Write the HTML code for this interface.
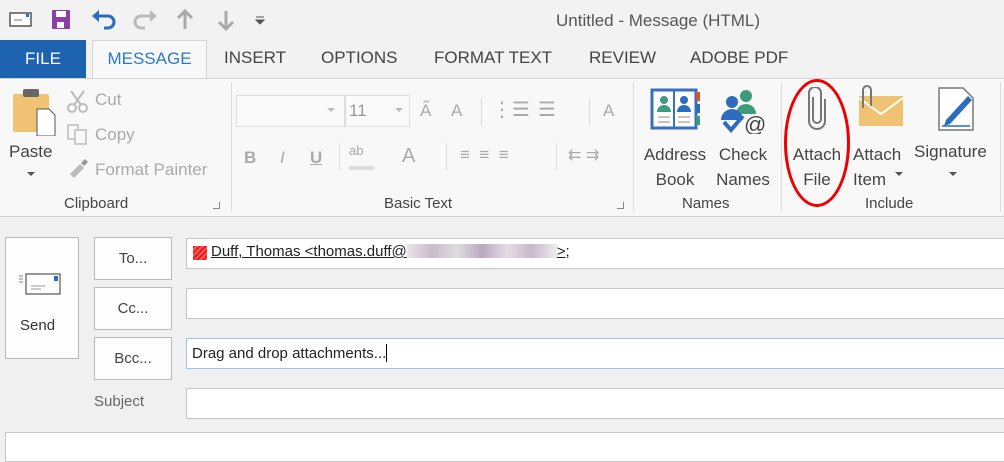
<!DOCTYPE html>
<html><head><meta charset="utf-8"><style>
*{margin:0;padding:0;box-sizing:border-box}
body{width:1004px;height:450px;overflow:hidden;background:#f0f0f0;font-family:"Liberation Sans","DejaVu Sans",sans-serif;position:relative;color:#444}
.a{position:absolute}
.t{font-size:17px;color:#444;white-space:nowrap}
.g{color:#aaa}
.btn{position:absolute;background:#fdfdfd;border:1px solid #b9b9b9;font-size:15px;color:#444;text-align:center}
.fld{position:absolute;left:186px;width:830px;height:31px;background:#fff;border:1px solid #c6c6c6}
.sep{position:absolute;width:1px;background:#dcdcdc}
</style></head><body>
<div class="a" style="left:0;top:0;width:1004px;height:40px;background:#f2f2f2"></div>
<div class="a" style="left:0;top:40px;width:1004px;height:38px;background:#f2f2f2"></div>
<svg class="a" style="left:0;top:0" width="280" height="40">
<rect x="10" y="13" width="21" height="13" fill="#fff" stroke="#555" stroke-width="1.5"/><line x1="14" y1="20" x2="22" y2="20" stroke="#777"/><rect x="26" y="14" width="3" height="3" fill="#2a6dbf"/>
<rect x="52" y="10" width="18" height="19" rx="1" fill="#8b3fa7"/><rect x="56" y="11" width="10" height="6" fill="#fff"/><rect x="57" y="22" width="7" height="6" fill="#fff"/>
<path d="M97 16 h11 a6 6 0 0 1 0 12 h-4" fill="none" stroke="#2a6dbf" stroke-width="3"/><path d="M92 16 l7-6 v12z" fill="#2a6dbf"/>
<path d="M152 16 h-11 a6 6 0 0 0 0 12 h4" fill="none" stroke="#bbb" stroke-width="3"/><path d="M157 16 l-7-6 v12z" fill="#bbb"/>
<path d="M185 29 V12 M178 18 l7-7 7 7" fill="none" stroke="#aaa" stroke-width="3"/>
<path d="M226 11 V28 M219 22 l7 7 7-7" fill="none" stroke="#aaa" stroke-width="3"/>
<path d="M256 17 h8 M256 20 l4 4 4-4z" stroke="#555" fill="#555"/>
</svg>
<div class="a t" style="left:556px;top:11px;font-size:17px;color:#555">Untitled - Message (HTML)</div>
<div class="a" style="left:0;top:40px;width:86px;height:38px;background:#1d63b0;color:#fff;font-size:17px;text-align:center;line-height:38px">FILE</div>
<div class="a" style="left:92px;top:40px;width:115px;height:39px;background:#f8f8f8;border:1px solid #d4d4d4;border-bottom:none;color:#2b79c6;font-size:17px;text-align:center;line-height:36px">MESSAGE</div>
<div class="a t" style="left:224px;top:48px">INSERT</div>
<div class="a t" style="left:321px;top:48px">OPTIONS</div>
<div class="a t" style="left:434px;top:48px">FORMAT TEXT</div>
<div class="a t" style="left:589px;top:48px">REVIEW</div>
<div class="a t" style="left:690px;top:48px">ADOBE PDF</div>
<div class="a" style="left:0;top:78px;width:1004px;height:139px;background:#f8f8f8;border-top:1px solid #d4d4d4;border-bottom:1px solid #d0d0d0"></div>
<div class="sep" style="left:231px;top:82px;height:130px"></div>
<div class="sep" style="left:633px;top:82px;height:130px"></div>
<div class="sep" style="left:781px;top:82px;height:130px"></div>
<div class="sep" style="left:1000px;top:82px;height:130px"></div>
<svg class="a" style="left:10px;top:86px" width="50" height="50"><rect x="3" y="8" width="36" height="38" rx="2" fill="#efc274"/><rect x="13" y="3" width="16" height="8" rx="2" fill="#666"/><path d="M27 23 h12 l6 6 v21 h-18z" fill="#fff" stroke="#555"/></svg>
<div class="a t" style="left:9px;top:142px">Paste</div>
<div class="a" style="left:27px;top:172px;border:4px solid transparent;border-top:4px solid #555"></div>
<svg class="a" style="left:66px;top:89px" width="24" height="24"><circle cx="6" cy="19" r="4" fill="none" stroke="#bbb" stroke-width="2"/><circle cx="17" cy="19" r="4" fill="none" stroke="#bbb" stroke-width="2"/><path d="M8 16 L18 2 M15 16 L5 2" stroke="#bbb" stroke-width="2"/></svg>
<div class="a t g" style="left:95px;top:90px">Cut</div>
<svg class="a" style="left:66px;top:123px" width="24" height="22"><rect x="2" y="2" width="10" height="14" fill="none" stroke="#bbb" stroke-width="1.5"/><rect x="9" y="7" width="11" height="14" fill="#f8f8f8" stroke="#bbb" stroke-width="1.5"/></svg>
<div class="a t g" style="left:95px;top:125px">Copy</div>
<svg class="a" style="left:66px;top:158px" width="24" height="22"><path d="M4 16 l10-10 4 4 -10 10z" fill="#bbb"/><path d="M15 5 l4-4 3 3 -4 4z" fill="#999"/></svg>
<div class="a t g" style="left:95px;top:160px">Format Painter</div>
<div class="a" style="left:64px;top:195px;font-size:15px;color:#444">Clipboard</div>
<div class="a" style="left:213px;top:202px;width:7px;height:7px;border-right:1px solid #888;border-bottom:1px solid #888"></div>
<div class="a" style="left:236px;top:95px;width:109px;height:32px;border:1px solid #dedede;background:#fafafa"></div>
<div class="a" style="left:327px;top:108px;border:4px solid transparent;border-top:4px solid #bbb"></div>
<div class="a" style="left:345px;top:95px;width:65px;height:32px;border:1px solid #dedede;background:#fafafa;font-size:17px;color:#999;padding:5px 3px">11</div>
<div class="a" style="left:395px;top:108px;border:4px solid transparent;border-top:4px solid #bbb"></div>
<div class="a t g" style="left:420px;top:101px">A&#779;</div>
<div class="a t g" style="left:451px;top:101px">A</div>
<div class="a" style="left:481px;top:98px;width:1px;height:28px;background:#ddd"></div>
<div class="a t g" style="left:492px;top:97px;font-size:20px">⋮☰</div>
<div class="a t g" style="left:538px;top:97px;font-size:20px">☰</div>
<div class="a" style="left:589px;top:98px;width:1px;height:28px;background:#ddd"></div>
<div class="a t g" style="left:603px;top:101px">A</div>
<div class="a t g" style="left:244px;top:148px;font-weight:bold">B</div>
<div class="a t g" style="left:280px;top:148px;font-style:italic">I</div>
<div class="a t g" style="left:310px;top:148px;text-decoration:underline;font-weight:bold">U</div>
<div class="a" style="left:339px;top:143px;width:1px;height:28px;background:#ddd"></div>
<div class="a" style="left:349px;top:166px;width:25px;height:4px;background:#ddd"></div>
<div class="a t g" style="left:349px;top:143px;font-size:13px">ab</div>
<div class="a t g" style="left:402px;top:145px;font-size:20px">A</div>
<div class="a" style="left:446px;top:143px;width:1px;height:28px;background:#ddd"></div>
<div class="a t g" style="left:460px;top:145px;font-size:17px">≡ &nbsp;≡ &nbsp;≡</div>
<div class="a" style="left:556px;top:143px;width:1px;height:28px;background:#ddd"></div>
<div class="a t g" style="left:568px;top:145px;font-size:16px">⇇ ⇉</div>
<div class="a" style="left:384px;top:195px;font-size:15px;color:#444">Basic Text</div>
<div class="a" style="left:617px;top:202px;width:7px;height:7px;border-right:1px solid #888;border-bottom:1px solid #888"></div>
<svg class="a" style="left:650px;top:86px" width="52" height="46"><rect x="2" y="4" width="44" height="38" fill="#fff" stroke="#3a6fbf" stroke-width="3"/><line x1="24" y1="4" x2="24" y2="42" stroke="#3a6fbf" stroke-width="2"/><circle cx="14" cy="14" r="4" fill="#3e9a7c"/><path d="M7 26 a7 7 0 0 1 14 0z" fill="#3e9a7c"/><circle cx="34" cy="14" r="4" fill="#2c6bbd"/><path d="M27 26 a7 7 0 0 1 14 0z" fill="#2c6bbd"/><path d="M8 31h12M8 36h12M28 31h12M28 36h12" stroke="#888"/><rect x="46" y="6" width="4" height="9" fill="#d9542b"/><rect x="46" y="18" width="4" height="9" fill="#2c6bbd"/><rect x="46" y="30" width="4" height="9" fill="#3e9a7c"/></svg>
<svg class="a" style="left:718px;top:86px" width="52" height="48"><circle cx="28" cy="10" r="6" fill="#3e9a7c"/><path d="M18 28 a10 10 0 0 1 20 0z" fill="#3e9a7c"/><circle cx="14" cy="16" r="6" fill="#2c6bbd"/><path d="M3 34 a11 11 0 0 1 22 0z" fill="#2c6bbd"/><path d="M6 36 l7 8 12-14" fill="none" stroke="#2c6bbd" stroke-width="4"/><text x="26" y="46" font-size="22" fill="#444" font-family="Liberation Sans">@</text></svg>
<div class="a t" style="left:641px;top:142px;line-height:25px;text-align:center;width:68px">Address<br>Book</div>
<div class="a t" style="left:714px;top:142px;line-height:25px;text-align:center;width:58px">Check<br>Names</div>
<div class="a" style="left:682px;top:195px;font-size:15px;color:#444">Names</div>
<svg class="a" style="left:805px;top:87px" width="24" height="44"><path d="M8 10 v22 a4 4 0 0 0 8 0 V6 a6 6 0 0 0 -12 0 v28 a8 8 0 0 0 16 0 V12" fill="none" stroke="#777" stroke-width="2"/></svg>
<div class="a t" style="left:788px;top:142px;line-height:25px;text-align:center;width:58px">Attach<br>File</div>
<svg class="a" style="left:855px;top:84px" width="52" height="44"><rect x="4" y="12" width="44" height="30" fill="#efc274"/><path d="M4 14 l22 16 22-16" fill="none" stroke="#fff" stroke-width="2"/><path d="M8 24 V6 a4 4 0 0 1 8 0 v16" fill="none" stroke="#777" stroke-width="2"/></svg>
<div class="a t" style="left:853px;top:142px;line-height:25px">Attach<br>Item</div>
<div class="a" style="left:895px;top:172px;border:4px solid transparent;border-top:4px solid #555"></div>
<svg class="a" style="left:934px;top:86px" width="48" height="46"><path d="M5 2 h24 l10 10 v32 h-34z" fill="#fff" stroke="#777" stroke-width="1.5"/><path d="M12 34 l22-24 4 4 -22 24 -6 2z" fill="#2c6bbd"/><line x1="8" y1="40" x2="36" y2="40" stroke="#2c6bbd" stroke-width="1.5"/></svg>
<div class="a t" style="left:914px;top:142px">Signature</div>
<div class="a" style="left:949px;top:172px;border:4px solid transparent;border-top:4px solid #555"></div>
<div class="a" style="left:865px;top:195px;font-size:15px;color:#444">Include</div>
<div class="a" style="left:784px;top:79px;width:66px;height:128px;border:3px solid #e00;border-radius:50%"></div>
<div class="btn" style="left:5px;top:237px;width:74px;height:122px"></div>
<svg class="a" style="left:17px;top:272px" width="46" height="26"><path d="M2 4h4M2 7h4M2 10h4" stroke="#888"/><rect x="9" y="2" width="34" height="20" fill="#fff" stroke="#555" stroke-width="1.2"/><rect x="37" y="4" width="4" height="5" fill="#2a6dbf"/><path d="M14 14h14M14 17h10" stroke="#999"/></svg>
<div class="a" style="left:20px;top:317px;font-size:15px;color:#333">Send</div>
<div class="btn" style="left:94px;top:237px;width:78px;height:43px;line-height:41px">To...</div>
<div class="btn" style="left:94px;top:287px;width:78px;height:43px;line-height:41px">Cc...</div>
<div class="btn" style="left:94px;top:337px;width:78px;height:43px;line-height:41px">Bcc...</div>
<div class="a" style="left:94px;top:393px;font-size:15px;color:#666">Subject</div>
<div class="fld" style="top:238px"></div>
<div class="a" style="left:193px;top:246px;width:14px;height:14px;background:repeating-linear-gradient(135deg,#d22 0 2px,#f55 2px 4px)"></div>
<div class="a" style="left:211px;top:243px;font-size:15px;color:#222;text-decoration:underline;white-space:nowrap">Duff, Thomas &lt;thomas.duff@<span style="display:inline-block;width:150px;height:14px;background:linear-gradient(90deg,#e8e4e8,#cbbbcc,#ddd,#bba9c0,#e4dce4,#c9b9cb,#eee);vertical-align:-2px"></span>&gt;;</div>
<div class="fld" style="top:288px"></div>
<div class="fld" style="top:338px;border-color:#9cc4e8"></div>
<div class="a" style="left:192px;top:344px;font-size:15px;color:#222">Drag and drop attachments...<span style="display:inline-block;width:1px;height:18px;background:#000;vertical-align:-4px"></span></div>
<div class="fld" style="top:388px"></div>
<div class="a" style="left:5px;top:432px;width:1010px;height:30px;background:#fff;border:1px solid #c6c6c6"></div>
</body></html>
